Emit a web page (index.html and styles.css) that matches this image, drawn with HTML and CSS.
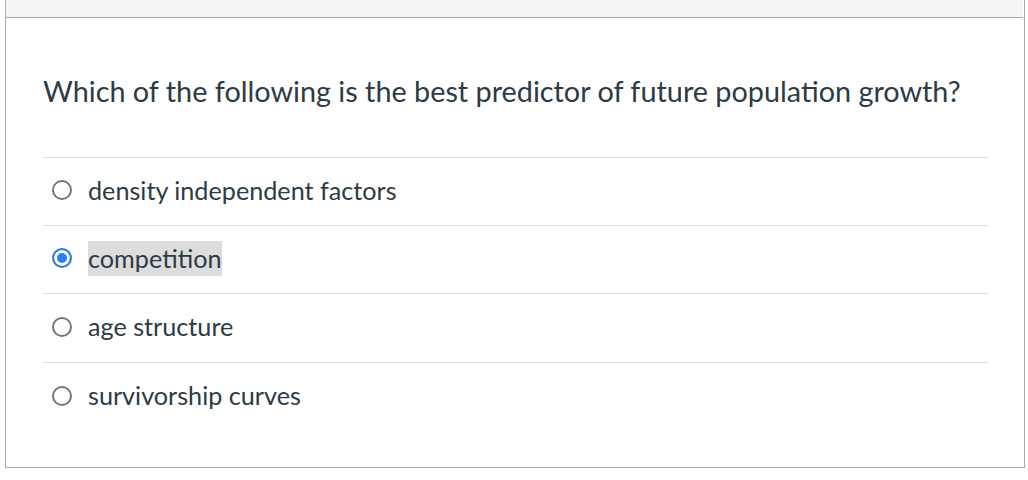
FILE: index.html
```html
<!DOCTYPE html>
<html>
<head>
<meta charset="utf-8">
<link rel="stylesheet" href="styles.css">
</head>
<body>
<div class="card">
  <div class="card-header"></div>
  <div class="card-body">
    <p class="question">Which of the following is the best predictor of future population growth?</p>
    <div class="answers">
      <label class="answer">
        <span class="radio"></span>
        <span class="answer-text">density independent factors</span>
      </label>
      <label class="answer">
        <span class="radio selected"></span>
        <span class="answer-text highlighted">competition</span>
      </label>
      <label class="answer">
        <span class="radio"></span>
        <span class="answer-text">age structure</span>
      </label>
      <label class="answer">
        <span class="radio"></span>
        <span class="answer-text">survivorship curves</span>
      </label>
    </div>
  </div>
</div>
</body>
</html>
```
FILE: styles.css
```css
html, body {
  margin: 0;
  padding: 0;
  background: #ffffff;
}
body {
  font-family: Lato, "Open Sans", sans-serif;
  color: #2d3b45;
}
.card {
  margin-left: 5px;
  width: 1018px;
  border: 1px solid #aaaaaa;
  border-top: none;
  height: 467px;
  box-sizing: content-box;
}
.card-header {
  height: 17px;
  background: #f5f5f5;
  border-bottom: 1px solid #aaaaaa;
  margin-right: 1px;
}
.card-body {
  padding: 0 36px 0 37px;
}
.question {
  margin: 0;
  padding-top: 55px;
  font-size: 28.8px;
  line-height: 36px;
  height: 84px;
}
.answers {
  border-top: 1px solid #dddddd;
}
.answer {
  display: flex;
  align-items: center;
  height: 68px;
  box-sizing: border-box;
  padding-bottom: 3px;
  border-bottom: 1px solid #dddddd;
  padding-left: 9px;
}
.answer:nth-child(3) {
  height: 69px;
}
.answer:last-child {
  border-bottom: none;
}
.radio {
  width: 16px;
  height: 16px;
  border: 2px solid #777777;
  border-radius: 50%;
  box-sizing: content-box;
  flex: none;
  margin-right: 16px;
  background: #ffffff;
}
.radio.selected {
  border-color: #2b7cf6;
  background: #2b7cf6;
  box-shadow: inset 0 0 0 3px #ffffff;
}
.answer-text {
  font-size: 25.2px;
  line-height: 35px;
}
.highlighted {
  background: #dddddd;
}
```
